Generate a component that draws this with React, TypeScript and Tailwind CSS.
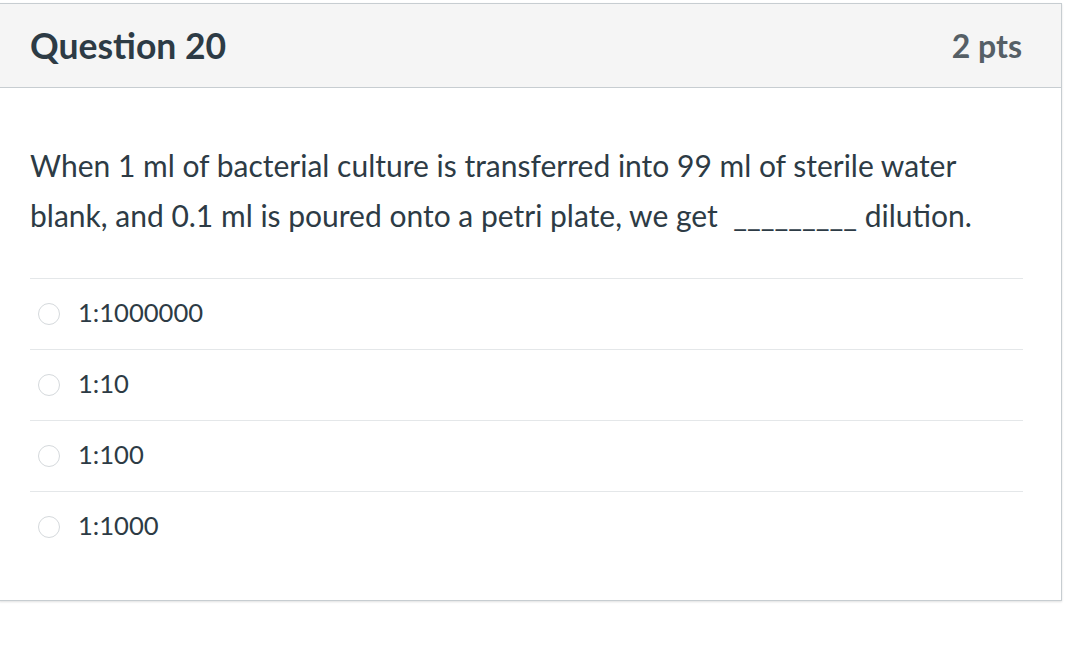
import React from 'react';

const answers = ['1:1000000', '1:10', '1:100', '1:1000'];

function Radio() {
    return <span className="block w-[22px] h-[22px] rounded-full border-[1.5px] border-[#d5d9dc] bg-white shrink-0"></span>;
}

export default function App() {
    return (
        <div className="min-h-screen bg-white pt-[3px]" style={{ fontFamily: 'Lato, "Noto Sans", sans-serif' }}>
            <div className="-ml-px w-[1063px] border border-[#c7cdd1] bg-white shadow-[0_1px_2px_rgba(0,0,0,0.12)]">
                <div className="h-[84px] flex items-center justify-between pl-[30px] pr-[39px] bg-[#f5f5f5] border-b border-[#c7cdd1]">
                    <h2 className="text-[35.5px] font-bold text-[#2d3b45] leading-none">Question 20</h2>
                    <span className="text-[32px] font-bold text-[#555f66] leading-none">2 pts</span>
                </div>
                <div className="pl-[30px] pr-[38px] pt-[52px] pb-[38px]">
                    <p className="text-[30px] leading-[50px] text-[#2d3b45] mb-[38px]">
                        When 1 ml of bacterial culture is transferred into 99 ml of sterile water blank, and 0.1 ml is poured onto a petri plate, we get&nbsp; _________ dilution.
                    </p>
                    {answers.map((a) => (
                        <div key={a} className="h-[71px] border-t border-[#e4e7e9] flex items-center pl-[8px] gap-[18px]">
                            <Radio />
                            <span className="text-[25.6px] text-[#2d3b45] -mt-[3px]">{a}</span>
                        </div>
                    ))}
                </div>
            </div>
        </div>
    );
}
